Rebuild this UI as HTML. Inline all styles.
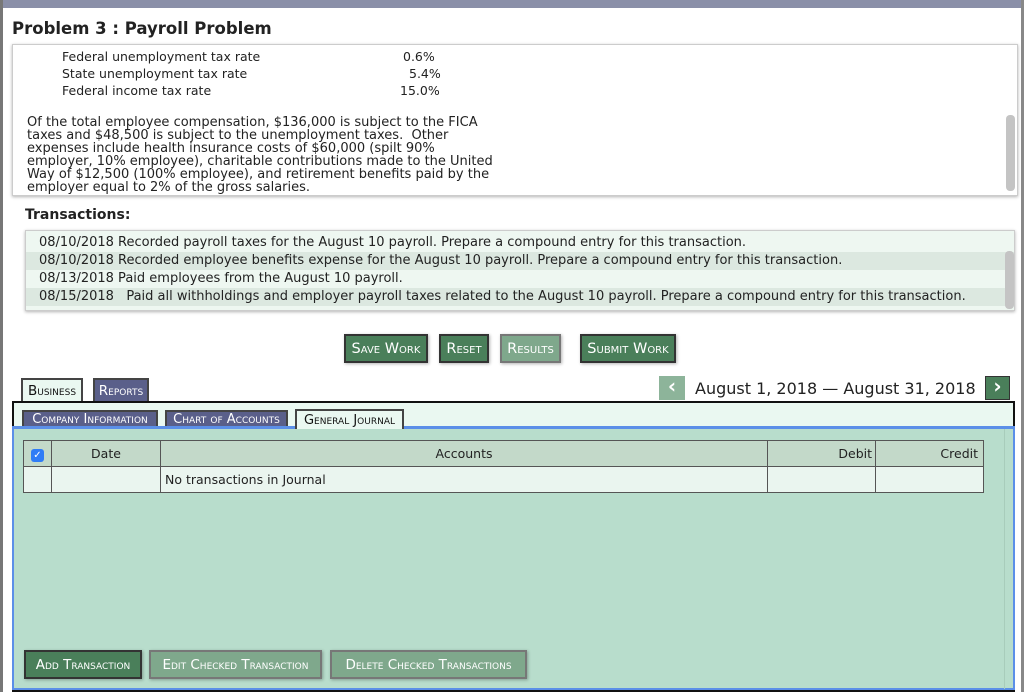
<!DOCTYPE html>
<html><head><style>
*{margin:0;padding:0;box-sizing:border-box}
body{width:1024px;height:692px;background:#fff;font-family:"DejaVu Sans","Liberation Sans",sans-serif;position:relative;overflow:hidden;color:#222}
.a{position:absolute}
.t{font-size:12.5px;white-space:nowrap}
.btn{position:absolute;background:#4a7f5a;border:2px solid #333;color:#fff;font-variant:small-caps;font-size:14.5px;display:flex;align-items:center;justify-content:center;box-shadow:1px 1px 3px rgba(0,0,0,.3);white-space:nowrap}
.lt{background:#7fa88c;border-color:#777}
.tab{position:absolute;font-variant:small-caps;font-size:13.5px;display:flex;align-items:center;justify-content:center;border:2px solid #444;border-bottom:none;white-space:nowrap}
.pu{background:#5a5f8a;color:#fff}
.wh{background:#eaf8f1;color:#111}
td{border:1px solid #555;font-size:12.5px}
</style></head><body>
<div class="a" style="left:0;top:0;width:1024px;height:8px;background:#8a8fa8"></div>
<div class="a" style="left:0;top:0;width:3px;height:692px;background:#777"></div>
<div class="a" style="left:1021px;top:0;width:3px;height:692px;background:#888"></div>
<div class="a" style="left:12px;top:19px;font-weight:bold;font-size:16.5px;color:#222">Problem 3 : Payroll Problem</div>
<div class="a" style="left:12px;top:44px;width:1006px;height:152px;border:1px solid #ccc;box-shadow:0 1px 3px rgba(0,0,0,.3);overflow:hidden">
 <div class="a t" style="left:49px;top:4px">Federal unemployment tax rate</div><div class="a t" style="left:390px;top:4px">0.6%</div>
 <div class="a t" style="left:49px;top:21px">State unemployment tax rate</div><div class="a t" style="left:396px;top:21px">5.4%</div>
 <div class="a t" style="left:49px;top:38px">Federal income tax rate</div><div class="a t" style="left:387px;top:38px">15.0%</div>
 <div class="a" style="left:14px;top:71px;font-size:13px;line-height:13px;width:472px">Of the total employee compensation, $136,000 is subject to the FICA taxes and $48,500 is subject to the unemployment taxes.&nbsp; Other expenses include health insurance costs of $60,000 (spilt 90% employer, 10% employee), charitable contributions made to the United Way of $12,500 (100% employee), and retirement benefits paid by the employer equal to 2% of the gross salaries.</div>
 <div class="a" style="left:993px;top:70px;width:9px;height:76px;background:#c4c4c4;border-radius:4px"></div>
</div>
<div class="a" style="left:25px;top:207px;font-weight:bold;font-size:14px">Transactions:</div>
<div class="a" style="left:25px;top:230px;width:990px;height:81px;border:1px solid #ccc;box-shadow:0 1px 3px rgba(0,0,0,.3);background:#eef7f1;overflow:hidden">
 <div class="a" style="left:0;top:21px;width:990px;height:18px;background:#dce8e0"></div>
 <div class="a" style="left:0;top:57px;width:990px;height:18px;background:#dce8e0"></div>
 <div class="a t" style="left:13px;top:4px;font-size:13px">08/10/2018 Recorded payroll taxes for the August 10 payroll. Prepare a compound entry for this transaction.</div>
 <div class="a t" style="left:13px;top:22px;font-size:13px">08/10/2018 Recorded employee benefits expense for the August 10 payroll. Prepare a compound entry for this transaction.</div>
 <div class="a t" style="left:13px;top:40px;font-size:13px">08/13/2018 Paid employees from the August 10 payroll.</div>
 <div class="a t" style="left:13px;top:58px;font-size:13px">08/15/2018&nbsp;&nbsp; Paid all withholdings and employer payroll taxes related to the August 10 payroll. Prepare a compound entry for this transaction.</div>
 <div class="a" style="left:979px;top:20px;width:9px;height:58px;background:#c4c4c4;border-radius:4px"></div>
</div>
<div class="btn" style="left:344px;top:334px;width:84px;height:29px">Save Work</div>
<div class="btn" style="left:439px;top:334px;width:50px;height:29px">Reset</div>
<div class="btn lt" style="left:500px;top:334px;width:61px;height:29px">Results</div>
<div class="btn" style="left:580px;top:334px;width:96px;height:29px">Submit Work</div>
<div class="tab wh" style="left:21px;top:378px;width:62px;height:24px">Business</div>
<div class="tab pu" style="left:93px;top:378px;width:56px;height:23px">Reports</div>
<div class="a" style="left:659px;top:376px;width:26px;height:24px;background:#8db49a;color:#fff;font-weight:bold;font-size:20px;text-align:center;line-height:20px">&lsaquo;</div>
<div class="a" style="left:695px;top:379px;font-size:16px;white-space:nowrap">August 1, 2018 — August 31, 2018</div>
<div class="a" style="left:985px;top:376px;width:25px;height:24px;background:#4a7f5a;border:1px solid #333;color:#fff;font-weight:bold;font-size:20px;text-align:center;line-height:19px">&rsaquo;</div>
<div class="a" style="left:12px;top:401px;width:1003px;height:291px;border:2px solid #111;background:#eaf8f1"></div>
<div class="tab pu" style="left:22px;top:410px;width:136px;height:17px;font-size:13px">Company Information</div>
<div class="tab pu" style="left:165px;top:410px;width:123px;height:17px;font-size:13px">Chart of Accounts</div>
<div class="tab wh" style="left:295px;top:409px;width:109px;height:20px;font-size:13px;z-index:2">General Journal</div>
<div class="a" style="left:12px;top:426px;width:1003px;height:264px;border:2px solid #5b8fe8;border-top:3px solid #5b8fe8;background:#b8ddcc">
 <div class="a" style="left:990px;top:0;width:1px;height:260px;background:#a8ccbb"></div>
</div>
<table class="a" style="left:23px;top:440px;width:961px;border-collapse:collapse">
<tr style="height:26px;background:#c3d9c9"><td style="width:28px;text-align:center"><span style="display:inline-block;width:13px;height:13px;background:#2f7cf6;border-radius:3px;color:#fff;font-size:10px;line-height:13px">✓</span></td><td style="width:109px;text-align:center">Date</td><td style="width:607px;text-align:center">Accounts</td><td style="width:108px;text-align:right;padding-right:3px">Debit</td><td style="text-align:right;padding-right:5px">Credit</td></tr>
<tr style="height:26px;background:#eaf5ef"><td></td><td></td><td style="padding-left:4px">No transactions in Journal</td><td></td><td></td></tr>
</table>
<div class="btn" style="left:24px;top:650px;width:118px;height:29px;font-size:13.5px">Add Transaction</div>
<div class="btn lt" style="left:149px;top:650px;width:173px;height:29px;font-size:13.5px">Edit Checked Transaction</div>
<div class="btn lt" style="left:330px;top:650px;width:197px;height:29px;font-size:13.5px">Delete Checked Transactions</div>
</body></html>
